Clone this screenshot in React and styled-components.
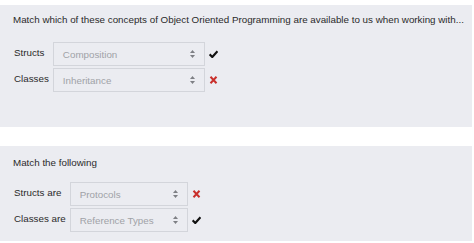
import React from "react";
import styled, { createGlobalStyle } from "styled-components";

const Global = createGlobalStyle`
  html, body { margin: 0; padding: 0; background: #ffffff; }
  body { font-family: "Liberation Sans", Arial, sans-serif; }
`;

const Page = styled.div`
  width: 474px;
  height: 243px;
  box-sizing: border-box;
  padding: 5px 2px 0 0;
  display: flex;
  flex-direction: column;
  gap: 19px;
`;

const Panel = styled.div`
  background: #ebecf1;
  height: ${(p) => p.$h}px;
  box-sizing: border-box;
  padding: ${(p) => p.$pt}px 0 0 13px;
  display: flex;
  flex-direction: column;
  gap: ${(p) => p.$gap}px;
`;

const Title = styled.div`
  font-size: 9.8px;
  line-height: 14px;
  color: #2a2a2a;
  white-space: nowrap;
`;

const Grid = styled.div`
  display: grid;
  grid-template-columns: auto auto auto;
  column-gap: 3px;
  row-gap: 2px;
  align-items: center;
  justify-content: start;
  padding-left: 1px;
`;

const Label = styled.div`
  font-size: 9.8px;
  line-height: 14px;
  color: #2a2a2a;
  margin-top: -2px;
  white-space: nowrap;
  padding-right: 1px;
`;

const Select = styled.div`
  width: ${(p) => p.$w}px;
  height: 24px;
  box-sizing: border-box;
  border: 1px solid #d3d5db;
  background: #ebecf1;
  display: flex;
  align-items: center;
  justify-content: space-between;
  padding: 0 9px 0 9px;
  font-size: 9.8px;
  color: #a0a2a7;
`;

const Arrows = styled.svg`
  width: 5px;
  height: 8px;
  display: block;
`;

const Mark = styled.svg`
  width: 9px;
  height: 8px;
  display: block;
  margin-left: 1px;
`;

function Updown() {
  return (
    <Arrows viewBox="0 0 5 8">
      <path d="M2.5 0 L5 3 L0 3 Z" fill="#7d7f84" />
      <path d="M2.5 8 L5 5 L0 5 Z" fill="#7d7f84" />
    </Arrows>
  );
}

function Check() {
  return (
    <Mark viewBox="0 0 9 8">
      <path d="M0.6 4.3 L3.3 7 L8.5 1.2" fill="none" stroke="#111" strokeWidth="2.2" strokeLinejoin="miter" />
    </Mark>
  );
}

function Cross() {
  return (
    <Mark viewBox="0 0 9 8">
      <path d="M1.5 0.8 L7.5 7.2 M7.5 0.8 L1.5 7.2" fill="none" stroke="#c9302c" strokeWidth="2" />
    </Mark>
  );
}

function Row({ label, value, width, ok }) {
  return (
    <>
      <Label>{label}</Label>
      <Select $w={width}>
        <span>{value}</span>
        <Updown />
      </Select>
      {ok ? <Check /> : <Cross />}
    </>
  );
}

export default function App() {
  return (
    <>
      <Global />
      <Page>
        <Panel $h={122} $pt={8} $gap={15}>
          <Title>
            Match which of these concepts of Object Oriented Programming are available to us when working with...
          </Title>
          <Grid>
            <Row label="Structs" value="Composition" width={152} ok />
            <Row label="Classes" value="Inheritance" width={152} ok={false} />
          </Grid>
        </Panel>
        <Panel $h={95} $pt={10} $gap={12}>
          <Title>Match the following</Title>
          <Grid>
            <Row label="Structs are" value="Protocols" width={118} ok={false} />
            <Row label="Classes are" value="Reference Types" width={118} ok />
          </Grid>
        </Panel>
      </Page>
    </>
  );
}
